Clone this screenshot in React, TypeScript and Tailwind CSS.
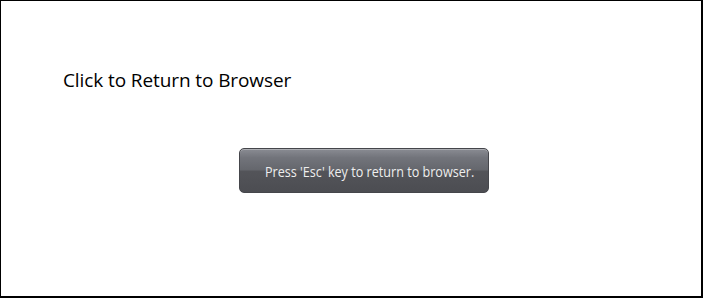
export default function App() {
  return (
    <div className="h-[298px] w-[705px] bg-white">
      <div className="flex h-[298px] w-[703px] flex-col border-t border-l border-r-2 border-b-2 border-black bg-white">
        <div className="pt-[66px] pl-[62px]">
          <h1 className="text-[19px] leading-[26px] text-black [font-family:'Open_Sans',sans-serif] tracking-[-0.1px]">
            Click to Return to Browser
          </h1>
        </div>
        <div className="mt-[55px] flex pl-[238px]">
          <div className="flex h-[45px] w-[250px] items-center overflow-hidden rounded-[5px] border border-[#45464b] bg-[linear-gradient(to_bottom,#8a8c93_0%,#72747b_20%,#65676d_48%,#535459_52%,#4c4d52_100%)] pl-[25px] pt-[1px] shadow-[inset_0_1px_0_rgba(255,255,255,0.3)]">
            <span className="origin-left scale-x-[0.84] whitespace-nowrap text-[15px] text-[#eeeeee] [font-family:'Open_Sans',sans-serif]">
              Press 'Esc' key to return to browser.
            </span>
          </div>
        </div>
      </div>
    </div>
  );
}
